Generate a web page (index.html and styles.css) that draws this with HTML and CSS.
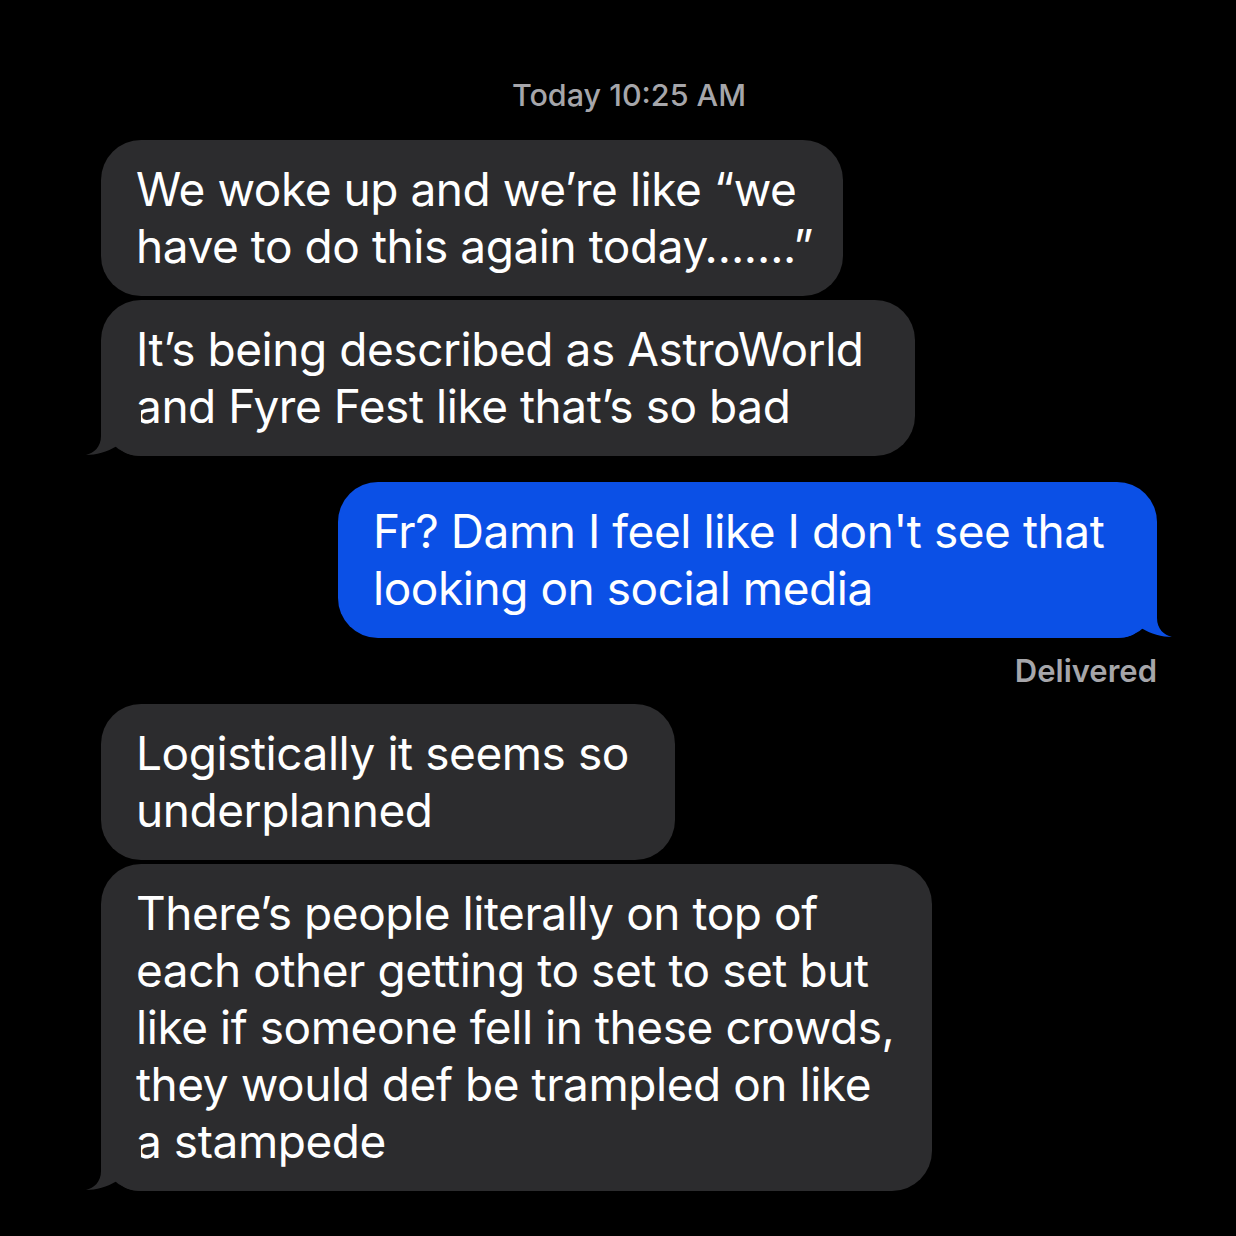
FILE: index.html
```html
<!DOCTYPE html>
<html lang="en">
<head>
<meta charset="utf-8">
<title>Messages</title>
<link rel="stylesheet" href="styles.css">
</head>
<body>
<main class="thread">
  <div class="stamp"><span class="stamp-day">Today</span> 10:25 AM</div>

  <div class="msg in w1">We woke up and we’re like “we<br>have to do this again today…….”</div>
  <div class="msg in w2 tail">It’s being described as AstroWorld<br>and Fyre Fest like that’s so bad
    <svg class="tail-svg" viewBox="-20 -50 64 50" width="64" height="50"><path d="M0 -50 L0 -20 C0 -9 -7 -3 -15 -1 C-5 -1 6 -4 16 -10 C22 -3 30 0 40 0 L40 -50 Z"/></svg>
  </div>

  <div class="msg out w3 tail">Fr? Damn I feel like I don't see that<br>looking on social media
    <svg class="tail-svg" viewBox="-20 -50 64 50" width="64" height="50"><path d="M0 -50 L0 -20 C0 -9 -7 -3 -15 -1 C-5 -1 6 -4 16 -10 C22 -3 30 0 40 0 L40 -50 Z"/></svg>
  </div>
  <div class="status">Delivered</div>

  <div class="msg in w4">Logistically it seems so<br>underplanned</div>
  <div class="msg in w5 tail">There’s people literally on top of<br>each other getting to set to set but<br>like if someone fell in these crowds,<br>they would def be trampled on like<br>a stampede
    <svg class="tail-svg" viewBox="-20 -50 64 50" width="64" height="50"><path d="M0 -50 L0 -20 C0 -9 -7 -3 -15 -1 C-5 -1 6 -4 16 -10 C22 -3 30 0 40 0 L40 -50 Z"/></svg>
  </div>
</main>
</body>
</html>
```

FILE: styles.css
```css
* { box-sizing: border-box; }

html, body {
  margin: 0;
  padding: 0;
  background: #000;
}

body {
  font-family: Inter, "Noto Sans", "Liberation Sans", sans-serif;
  color: #fff;
  width: 1236px;
  height: 1236px;
  overflow: hidden;
}

.thread {
  display: flex;
  flex-direction: column;
  padding: 78px 79px 0 101px;
}

.stamp {
  align-self: center;
  font-size: 30.5px;
  line-height: 34px;
  font-weight: 500;
  color: #a6a6aa;
  margin-bottom: 28px;
}

.msg {
  position: relative;
  font-size: 46px;
  line-height: 57px;
  letter-spacing: -0.45px;
  padding: 21px 20px 21px 35px;
  border-radius: 40px;
  white-space: nowrap;
}

.msg + .msg { margin-top: 4px; }

.in {
  align-self: flex-start;
  background: #2c2c2e;
}

.msg.out {
  align-self: flex-end;
  background: #0b50e6;
  margin-top: 26px;
}

.w1 { width: 742px; }
.w2 { width: 814px; }
.w3 { width: 819px; }
.w4 { width: 574px; }
.w5 { width: 831px; }

.tail-svg {
  position: absolute;
  bottom: 0;
  left: -20px;
}

.in .tail-svg path { fill: #2c2c2e; }
.out .tail-svg path { fill: #0b50e6; }

.out .tail-svg {
  left: auto;
  right: -20px;
  transform: scaleX(-1);
}

.status {
  align-self: flex-end;
  font-size: 31px;
  line-height: 34px;
  font-weight: 600;
  color: #a6a6aa;
  margin-top: 16px;
  margin-bottom: 16px;
}

.status + .msg { margin-top: 0; }
```
